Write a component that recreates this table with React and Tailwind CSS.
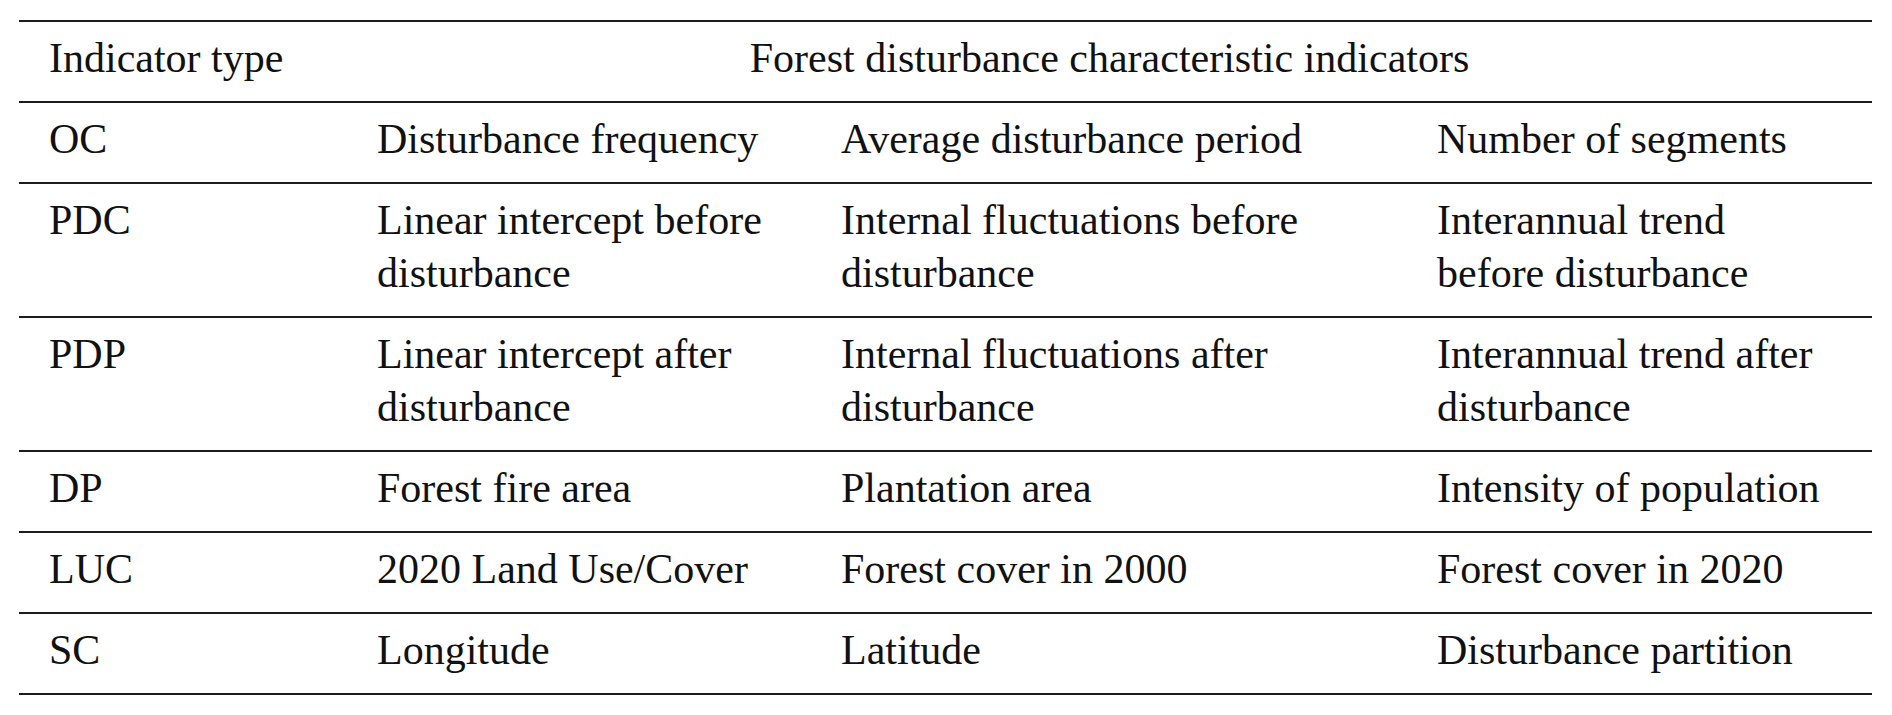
const rows = [
  ["OC", "Disturbance frequency", "Average disturbance period", "Number of segments"],
  [
    "PDC",
    "Linear intercept before disturbance",
    "Internal fluctuations before disturbance",
    "Interannual trend before disturbance",
  ],
  [
    "PDP",
    "Linear intercept after disturbance",
    "Internal fluctuations after disturbance",
    "Interannual trend after disturbance",
  ],
  ["DP", "Forest fire area", "Plantation area", "Intensity of population"],
  ["LUC", "2020 Land Use/Cover", "Forest cover in 2000", "Forest cover in 2020"],
  ["SC", "Longitude", "Latitude", "Disturbance partition"],
];

const cell = "pl-[30px] pr-[45px] pt-[10px] pb-[16px] align-top text-left font-normal";

const App = () => {
  return (
    <div className="min-h-screen bg-white pt-[20px] pl-[19px]">
      <table
        className="table-fixed border-collapse w-[1853px] border-t-2 border-[#1c1c1c] text-[42px] leading-[53px] text-[#111]"
        style={{ fontFamily: '"Liberation Serif", "Times New Roman", serif' }}
      >
        <colgroup>
          <col className="w-[328px]" />
          <col className="w-[464px]" />
          <col className="w-[596px]" />
          <col className="w-[465px]" />
        </colgroup>
        <thead>
          <tr className="border-b-2 border-[#1c1c1c]">
            <th className={cell}>Indicator type</th>
            <th colSpan={3} className="px-[30px] pt-[10px] pb-[16px] align-top text-center font-normal">
              Forest disturbance characteristic indicators
            </th>
          </tr>
        </thead>
        <tbody>
          {rows.map((r) => (
            <tr key={r[0]} className="border-b-2 border-[#1c1c1c]">
              {r.map((c, i) => (
                <td key={i} className={cell}>
                  {c}
                </td>
              ))}
            </tr>
          ))}
        </tbody>
      </table>
    </div>
  );
};

export default App;
